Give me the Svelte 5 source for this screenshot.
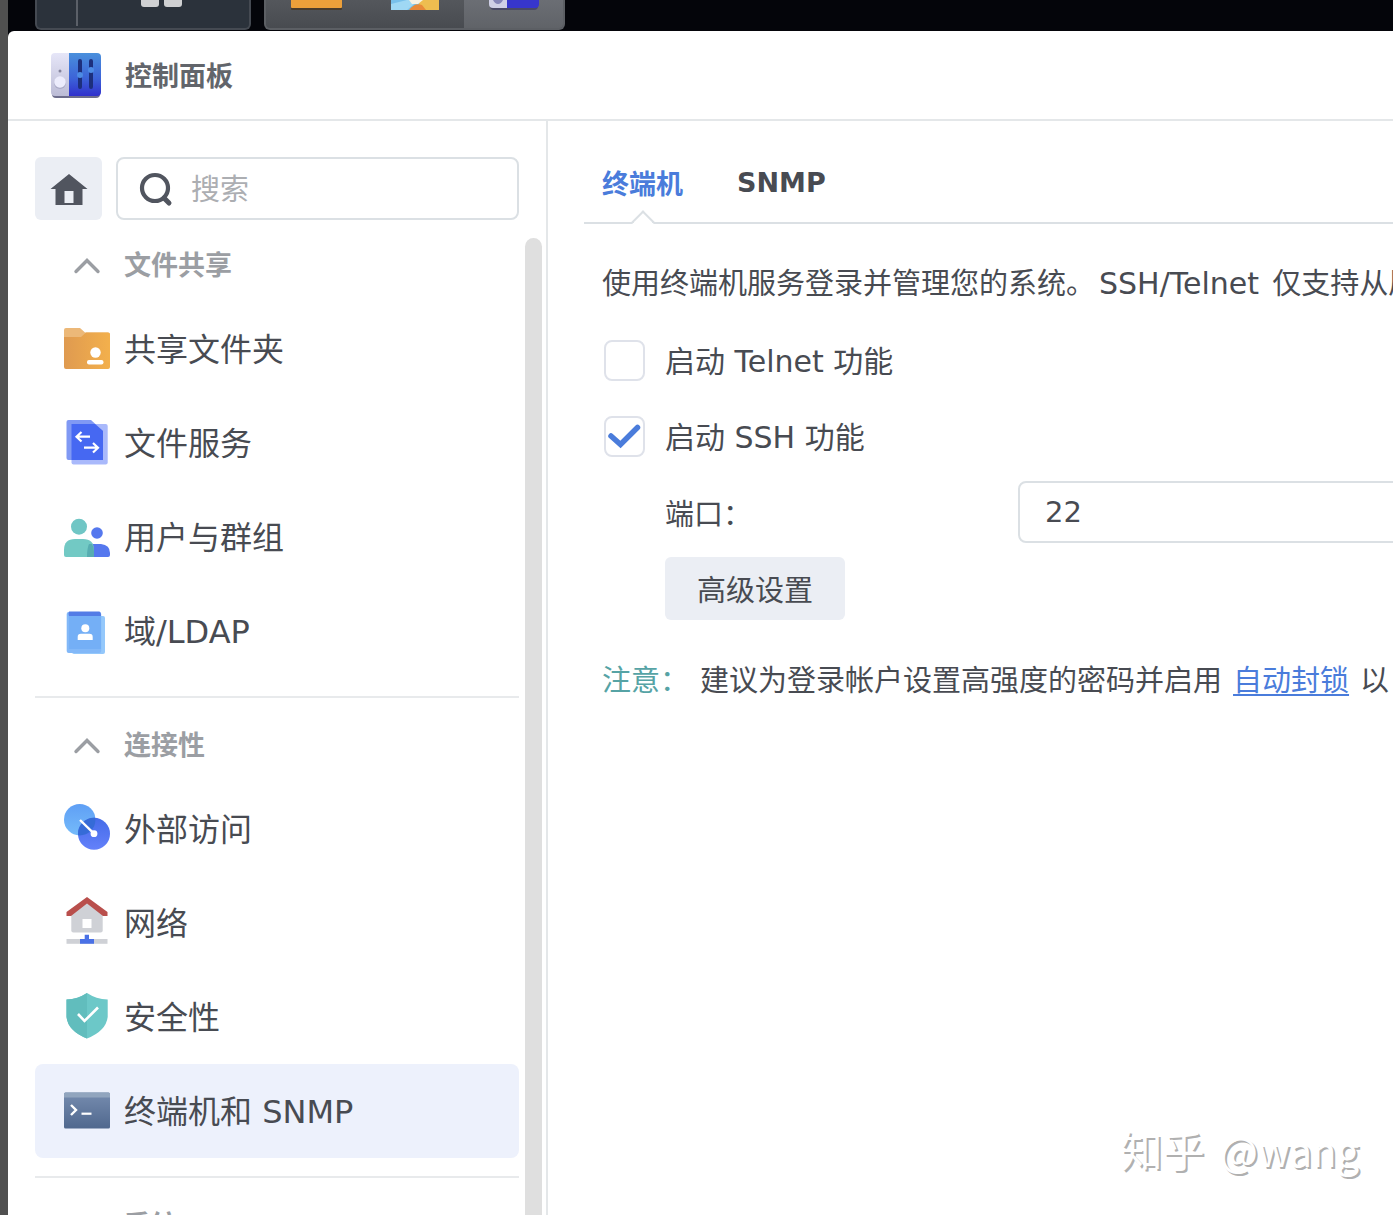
<script lang="ts">
	type Item = { id: string; label: string };
	type Group = { title: string; items: Item[] };

	const groups: Group[] = [
		{
			title: '文件共享',
			items: [
				{ id: 'folder', label: '共享文件夹' },
				{ id: 'service', label: '文件服务' },
				{ id: 'users', label: '用户与群组' },
				{ id: 'ldap', label: '域/LDAP' }
			]
		},
		{
			title: '连接性',
			items: [
				{ id: 'external', label: '外部访问' },
				{ id: 'network', label: '网络' },
				{ id: 'security', label: '安全性' },
				{ id: 'terminal', label: '终端机和 SNMP' }
			]
		},
		{ title: '系统', items: [] }
	];

	const tabs = ['终端机', 'SNMP'];

	let selected = $state('terminal');
	let activeTab = $state('终端机');
	let query = $state('');
	let telnet = $state(false);
	let ssh = $state(true);
	let port = $state('22');
</script>

{#snippet panelIcon()}
	<svg class="panel-icon" viewBox="0 0 52 46" aria-hidden="true">
		<defs>
			<linearGradient id="panel-left" x1="0" y1="0" x2="0" y2="1">
				<stop offset="0" stop-color="#e6e6f8" />
				<stop offset="1" stop-color="#bcbcd6" />
			</linearGradient>
			<linearGradient id="panel-right" x1="0" y1="0" x2="0" y2="1">
				<stop offset="0" stop-color="#4a90dc" />
				<stop offset="0.6" stop-color="#3c62d8" />
				<stop offset="1" stop-color="#3030cc" />
			</linearGradient>
		</defs>
		<rect x="2" y="5" width="48" height="41" rx="4" fill="#6d6d8c" />
		<path d="M5 1H19V44H5Q1 44 1 40V5Q1 1 5 1Z" fill="url(#panel-left)" />
		<path d="M19 1H47Q51 1 51 5V40Q51 44 47 44H19Z" fill="url(#panel-right)" />
		<circle cx="10" cy="19" r="1.5" fill="#83839c" />
		<circle cx="10" cy="31" r="6" fill="#aaaac6" />
		<circle cx="10" cy="30" r="5.8" fill="#ececfc" />
		<path d="M30 9V35M41 9V35" stroke="#1d2f7c" stroke-width="4" stroke-linecap="round" />
		<circle cx="30" cy="23" r="3" fill="#4d8be4" />
		<circle cx="41" cy="18" r="3" fill="#4d8be4" />
	</svg>
{/snippet}

{#snippet itemIcon(id: string)}
	<svg class="item-icon" viewBox="0 0 48 48" aria-hidden="true">
		{#if id === 'folder'}
			<defs>
				<linearGradient id="folder-front" x1="0" y1="0" x2="1" y2="0">
					<stop offset="0" stop-color="#df9a50" />
					<stop offset="1" stop-color="#f3b04c" />
				</linearGradient>
			</defs>
			<path d="M1 5Q1 3 3 3H17L22 7.500H45Q47 7.500 47 9.500V20H1Z" fill="#ecb878" />
			<path d="M1 12H18L23 7.500H45Q47 7.500 47 9.500V42Q47 44 45 44H3Q1 44 1 42Z" fill="url(#folder-front)" />
			<circle cx="32.500" cy="27.500" r="5.200" fill="#fff" />
			<rect x="24" y="35" width="16.500" height="4.500" rx="2" fill="#fff" />
		{:else if id === 'service'}
			<rect x="8.500" y="5" width="36.200" height="40.500" rx="2" fill="#a9b9fb" />
			<path d="M5.500 1H28L40 12V41H5.500Q3.500 41 3.500 39V3Q3.500 1 5.500 1Z" fill="#8099f4" />
			<path d="M8.500 5H32L40 12V41H8.500Z" fill="#4668f2" />
			<path
				d="M27 17.700H14M18.500 13L13.500 17.700L18.500 22.500M21 28.700H34M30 24L35 28.700L30 33.500"
				fill="none"
				stroke="#fff"
				stroke-width="2.200"
			/>
		{:else if id === 'users'}
			<circle cx="34" cy="20" r="5.800" fill="#5578ee" />
			<path d="M24 44V31H38Q47 32 47 40V42Q47 44 45 44Z" fill="#5578ee" />
			<circle cx="16" cy="13.700" r="8" fill="#70c6c5" />
			<path d="M1 42V37Q1 26 12 26H20Q31 26 31 37V44H3Q1 44 1 42Z" fill="#72c9c4" />
			<path d="M26 31H29Q31 34 31 38V44H24Q24 35 26 31Z" fill="#57adb1" />
		{:else if id === 'ldap'}
			<rect x="9" y="9" width="33" height="38" rx="2" fill="#94c8fb" />
			<rect x="3.700" y="5" width="34.500" height="41" rx="2" fill="#82b8f8" />
			<path d="M6 4.500H36Q38 4.500 38 9H6Q5 7 6 4.500Z" fill="#537ce6" />
			<rect x="6" y="9" width="32" height="33" fill="#74aff6" />
			<circle cx="22.300" cy="21.300" r="4" fill="#fff" />
			<path d="M14.700 33V30Q14.700 26.700 18 26.700H26.500Q29.700 26.700 29.700 30V33Z" fill="#fff" />
		{:else if id === 'external'}
			<defs>
				<linearGradient id="globe-a" x1="0" y1="0" x2="0" y2="1">
					<stop offset="0" stop-color="#5f9ff5" />
					<stop offset="1" stop-color="#75bbfa" />
				</linearGradient>
				<linearGradient id="globe-b" x1="0" y1="0" x2="0" y2="1">
					<stop offset="0" stop-color="#446be8" />
					<stop offset="1" stop-color="#6481fa" />
				</linearGradient>
				<clipPath id="globe-clip"><circle cx="16.700" cy="14.700" r="15.700" /></clipPath>
			</defs>
			<circle cx="16.700" cy="14.700" r="15.700" fill="url(#globe-a)" />
			<circle cx="31" cy="28.700" r="16" fill="url(#globe-b)" />
			<circle cx="31" cy="28.700" r="16" fill="#356bd7" clip-path="url(#globe-clip)" />
			<path d="M17 15L31 28.700" stroke="#fff" stroke-width="2.400" />
			<circle cx="31" cy="28.700" r="3.400" fill="#fff" />
		{:else if id === 'network'}
			<path d="M8.300 15L24 2L39.700 15V31.500Q39.700 33.500 37.700 33.500H10.300Q8.300 33.500 8.300 31.500Z" fill="#cfd1d6" />
			<path d="M3.500 17V13L24 -2L44.500 13V17H40L24 4.500L8 17Z" fill="#b94f4c" />
			<rect x="19.500" y="20" width="9" height="9" fill="#fff" />
			<rect x="3.500" y="40" width="41" height="4.800" fill="#cfd1d6" />
			<path d="M17 40H21.700V35.700H26V40H31V44.800H17Z" fill="#4a71e6" />
		{:else if id === 'security'}
			<path d="M24 0Q33 6 44.700 6.500V24Q43 38 24 45.500Q5 38 3.500 24V6.500Q15 6 24 0Z" fill="#6cc8c8" />
			<path d="M24 0V45.500Q5 38 3.500 24V6.500Q15 6 24 0Z" fill="#61bdbd" />
			<path d="M15 21L21.500 28L35 14.500" fill="none" stroke="#fff" stroke-width="2.600" />
		{:else if id === 'terminal'}
			<defs>
				<linearGradient id="terminal-bg" x1="0" y1="0" x2="0" y2="1">
					<stop offset="0" stop-color="#768caf" />
					<stop offset="1" stop-color="#50688e" />
				</linearGradient>
			</defs>
			<rect x="1" y="5.500" width="46" height="36" rx="1.500" fill="url(#terminal-bg)" />
			<path d="M2.500 5.500H45.500Q47 5.500 47 7V10.500H1V7Q1 5.500 2.500 5.500Z" fill="#91a5be" />
			<path d="M8 18L13 23L8 28" fill="none" stroke="#fff" stroke-width="2.400" />
			<path d="M18.500 26.700H28.500" stroke="#fff" stroke-width="2.200" />
		{/if}
	</svg>
{/snippet}

{#snippet checkbox(label: string, checked: boolean, toggle: () => void)}
	<label class="row check">
		<span class="check-box">
			<input type="checkbox" {checked} onchange={toggle} />
			{#if checked}
				<svg viewBox="0 0 41 41" aria-hidden="true">
					<path d="M7 20L16.500 28.500L33.500 11.500" fill="none" stroke="#4a7cdb" stroke-width="5.500" stroke-linecap="round" />
				</svg>
			{/if}
		</span>
		<span>{label}</span>
	</label>
{/snippet}

<div class="desktop">
	<div class="taskbar">
		<div class="tray menu">
			<span class="menu-rule"></span>
			<span class="squares"><i></i><i></i></span>
		</div>
		<div class="tray apps">
			<span class="app">
				<svg viewBox="0 0 52 12" aria-hidden="true">
					<rect x="1" y="-8" width="51" height="18" rx="1" fill="#4a3c2c" />
					<rect x="1" y="-8" width="51" height="16" rx="1" fill="#eda03a" />
				</svg>
			</span>
			<span class="app">
				<svg viewBox="0 0 52 12" aria-hidden="true">
					<rect x="2" y="0" width="48" height="10" fill="#78c0ea" />
					<rect x="30" y="0" width="20" height="10" fill="#eebd50" />
					<path d="M2 4L18 0H30L18 10H2Z" fill="#9fd8f4" />
					<path d="M20 10Q26 2 33 5L37 10Z" fill="#e8893a" />
					<path d="M20 0H34L29 4H23Z" fill="#f6f1e4" />
				</svg>
			</span>
			<span class="app current">
				<svg viewBox="0 0 52 12" aria-hidden="true">
					<rect x="2" y="-8" width="48" height="18" rx="4" fill="#4a4a66" />
					<rect x="1" y="-8" width="24" height="16" rx="4" fill="#cfcfe6" />
					<path d="M19 0H51V4Q51 8 47 8H19Z" fill="#3736cc" />
					<path d="M5 0H15Q13 4 10 4T5 0Z" fill="#8585b8" />
				</svg>
			</span>
		</div>
	</div>

	<div class="window">
		<header>
			{@render panelIcon()}
			<h1>控制面板</h1>
		</header>

		<div class="body">
			<aside>
				<div class="search-row">
					<button class="home" aria-label="主页">
						<svg viewBox="0 0 38 32" aria-hidden="true">
							<path d="M19 1L37.500 16H32.500V32H5.500V16H.5Z" fill="#51555f" />
							<rect x="14.500" y="18" width="9" height="12" fill="#ebeef4" />
						</svg>
					</button>
					<label class="search">
						<svg viewBox="0 0 36 36" aria-hidden="true">
							<circle cx="17" cy="17" r="13" fill="none" stroke="#51555f" stroke-width="4.200" />
							<path d="M26 27L31 32" stroke="#51555f" stroke-width="5" stroke-linecap="round" />
						</svg>
						<input type="text" placeholder="搜索" aria-label="搜索" bind:value={query} />
					</label>
				</div>

				<div class="scroller">
					<nav>
						{#each groups as group}
							<section>
								<h2>
									{#if group.items.length}
										<svg class="item-icon" viewBox="0 0 48 48" aria-hidden="true">
											<path d="M13 29.500L24 18.500L35 29.500" fill="none" stroke="#9b9ea3" stroke-width="3.400" stroke-linecap="round" />
										</svg>
									{:else}
										<span class="item-icon"></span>
									{/if}
									<span class="label">{group.title}</span>
								</h2>
								{#each group.items as item}
									<button
										class="item"
										class:selected={selected === item.id}
										onclick={() => (selected = item.id)}
									>
										{@render itemIcon(item.id)}
										<span class="label">{item.label}</span>
									</button>
								{/each}
							</section>
						{/each}
					</nav>
					<div class="thumb"></div>
				</div>
			</aside>

			<main>
				<div class="tabs" role="tablist">
					{#each tabs as tab}
						<button
							role="tab"
							aria-selected={activeTab === tab}
							class:active={activeTab === tab}
							onclick={() => (activeTab = tab)}
						>
							{tab}
						</button>
					{/each}
				</div>

				<div class="content">
					<p class="row">使用终端机服务登录并管理您的系统。<span class="latin">SSH/Telnet</span> 仅支持从属</p>
					{@render checkbox('启动 Telnet 功能', telnet, () => (telnet = !telnet))}
					{@render checkbox('启动 SSH 功能', ssh, () => (ssh = !ssh))}
					<div class="row indent">
						<label class="port-label" for="port">端口：</label>
						<input id="port" class="port" type="text" bind:value={port} />
					</div>
					<div class="row indent">
						<button class="advanced">高级设置</button>
					</div>
					<p class="row note">
						<span class="hint">注意：</span>
						<span>建议为登录帐户设置高强度的密码并启用</span>
						<a href="#autoblock">自动封锁</a>
						<span>以</span>
					</p>
				</div>
			</main>
		</div>
	</div>

	<div class="watermark">知乎 <span>@wang</span></div>
</div>

<style>
	:global(body) {
		margin: 0;
		overflow: hidden;
	}

	.desktop {
		position: relative;
		display: flex;
		flex-direction: column;
		height: 100vh;
		overflow: hidden;
		box-sizing: border-box;
		border-left: 8px solid #505050;
		background: #04050a;
		color: #484b52;
		font-family: 'DejaVu Sans', 'Noto Sans CJK SC', sans-serif;
		font-size: 29px;
	}

	.desktop :is(button, input) {
		box-sizing: border-box;
		margin: 0;
		color: inherit;
		font: inherit;
	}

	button {
		padding: 0;
		border: 0;
		background: none;
		cursor: pointer;
	}

	svg {
		display: block;
		flex: none;
		overflow: visible;
	}

	/* taskbar */
	.taskbar {
		display: flex;
		flex: none;
		gap: 13px;
		height: 31px;
		padding-left: 27px;
	}

	.tray {
		display: flex;
		box-sizing: border-box;
		height: 30px;
		overflow: hidden;
		border: 2px solid #454a52;
		border-top: 0;
		border-radius: 0 0 6px 6px;
	}

	.menu {
		width: 216px;
		background: #2b323b;
	}

	.menu-rule {
		width: 2px;
		height: 26px;
		margin-left: 39px;
		background: #5b6068;
	}

	.squares {
		display: flex;
		gap: 5px;
		margin-left: 63px;
	}

	.squares i {
		width: 18px;
		height: 7px;
		border-radius: 0 0 3px 3px;
		background: #cfd0d2;
	}

	.apps {
		width: 301px;
		border-color: #5c5f64;
		background: linear-gradient(#54575c, #484b50);
	}

	.app {
		display: flex;
		flex: 1;
		justify-content: center;
	}

	.app svg {
		width: 52px;
		height: 12px;
		overflow: hidden;
	}

	.current {
		background: linear-gradient(#6b6e74, #606368);
	}

	/* window */
	.window {
		display: flex;
		flex: 1;
		flex-direction: column;
		min-height: 0;
		overflow: hidden;
		border-radius: 6px 0 0 0;
		background: #fff;
	}

	header {
		display: flex;
		flex: none;
		align-items: center;
		gap: 23px;
		height: 88px;
		padding-left: 42px;
		border-bottom: 2px solid #e4e7e9;
	}

	.panel-icon {
		width: 52px;
		height: 46px;
	}

	h1,
	h2 {
		margin: 0;
		font-size: 27px;
		font-weight: 700;
	}

	h1 {
		padding-bottom: 2px;
		color: #62656b;
	}

	.body {
		display: flex;
		flex: 1;
		min-height: 0;
	}

	/* sidebar */
	aside {
		display: flex;
		flex: none;
		flex-direction: column;
		width: 538px;
		border-right: 2px solid #e4e7e9;
	}

	.search-row {
		display: flex;
		flex: none;
		gap: 14px;
		padding: 36px 27px 0;
	}

	.home {
		display: grid;
		place-items: center;
		width: 67px;
		height: 63px;
		border-radius: 6px;
		background: #ebeef4;
	}

	.home svg {
		width: 38px;
		height: 32px;
	}

	.search {
		display: flex;
		flex: 1;
		align-items: center;
		gap: 17px;
		box-sizing: border-box;
		min-width: 0;
		height: 63px;
		padding: 0 20px;
		border: 2px solid #dbe0e4;
		border-radius: 8px;
	}

	.search svg {
		width: 36px;
		height: 36px;
	}

	.search input {
		flex: 1;
		min-width: 0;
		padding: 3px 0 0;
		border: 0;
		outline: 0;
		background: none;
	}

	.search input::placeholder {
		color: #acaeb2;
		opacity: 1;
	}

	.scroller {
		display: flex;
		flex: 1;
		gap: 6px;
		min-height: 0;
		padding: 0 4px 0 27px;
	}

	nav {
		flex: 1;
		overflow: hidden;
	}

	section {
		padding: 11px 0 18px;
		border-bottom: 2px solid #e8eaec;
	}

	section:first-child {
		padding-top: 9px;
	}

	h2 {
		display: flex;
		align-items: center;
		gap: 13px;
		height: 73px;
		padding-left: 28px;
		color: #9b9ea3;
	}

	.item-icon {
		flex: none;
		width: 48px;
		height: 48px;
	}

	.label {
		padding-bottom: 4px;
	}

	.item {
		display: flex;
		align-items: center;
		gap: 13px;
		width: 100%;
		height: 94px;
		padding-left: 28px;
		border-radius: 8px;
		text-align: left;
	}

	.desktop .item {
		font-size: 32px;
	}

	.selected {
		background: #edf1fc;
	}

	.thumb {
		width: 17px;
		margin-top: 18px;
		border-radius: 9px 9px 0 0;
		background: #dfdfdf;
	}

	/* main pane */
	main {
		flex: 1;
		min-width: 0;
		padding: 36px 0 0 36px;
		overflow: hidden;
		white-space: nowrap;
	}

	.tabs {
		display: flex;
		gap: 54px;
		height: 65px;
		padding-left: 18px;
		border-bottom: 2px solid #dbe0e4;
	}

	.tabs button {
		position: relative;
		height: 50px;
	}

	.desktop .tabs button {
		font-size: 27px;
		font-weight: 700;
	}

	.desktop .tabs .active {
		color: #4a7cdb;
	}

	.tabs .active::after {
		position: absolute;
		bottom: -25px;
		left: 50%;
		width: 14px;
		height: 14px;
		border: 2px solid #dbe0e4;
		border-right-color: transparent;
		border-bottom-color: transparent;
		background: linear-gradient(135deg, #fff 60%, transparent 60%);
		content: '';
		transform: translateX(-50%) rotate(45deg);
	}

	.content {
		padding: 22px 0 0 18px;
	}

	.row {
		display: flex;
		align-items: center;
		height: 76px;
		margin: 0;
	}

	p.row {
		display: block;
		line-height: 76px;
	}

	.latin {
		padding: 0 4px;
		font-size: 30px;
	}

	.check {
		gap: 20px;
		padding-left: 2px;
		font-size: 30px;
	}

	.check-box {
		display: grid;
		width: 41px;
		height: 41px;
	}

	.check-box > * {
		grid-area: 1 / 1;
		width: 41px;
		height: 41px;
	}

	.check-box input {
		appearance: none;
		border: 2px solid #dfe2ea;
		border-radius: 8px;
		background: #fff;
	}

	.check-box svg {
		pointer-events: none;
	}

	.check > span:last-child {
		padding-bottom: 2px;
	}

	.indent {
		padding-left: 63px;
	}

	.port-label {
		flex: none;
		width: 353px;
	}

	.port {
		flex: none;
		width: 520px;
		height: 62px;
		padding: 0 25px;
		border: 2px solid #dbe0e4;
		border-radius: 8px;
		background: #fff;
	}

	.desktop .advanced {
		height: 63px;
		padding: 0 32px;
		border-radius: 6px;
		background: #ebeef4;
	}

	.content .note {
		display: flex;
		gap: 11px;
		margin-top: 17px;
	}

	.hint {
		color: #56a3a5;
	}

	a {
		color: #4a7cdb;
		text-decoration: underline;
		text-decoration-thickness: 2px;
		text-underline-offset: 3px;
	}

	.watermark {
		position: absolute;
		right: 34px;
		bottom: 36px;
		color: #fff;
		font-family: 'Noto Sans CJK SC', sans-serif;
		font-size: 42px;
		text-shadow: 2px 2px 0 #b0b0b0;
	}

	.watermark span {
		padding-left: 6px;
		font-size: 40px;
	}
</style>
